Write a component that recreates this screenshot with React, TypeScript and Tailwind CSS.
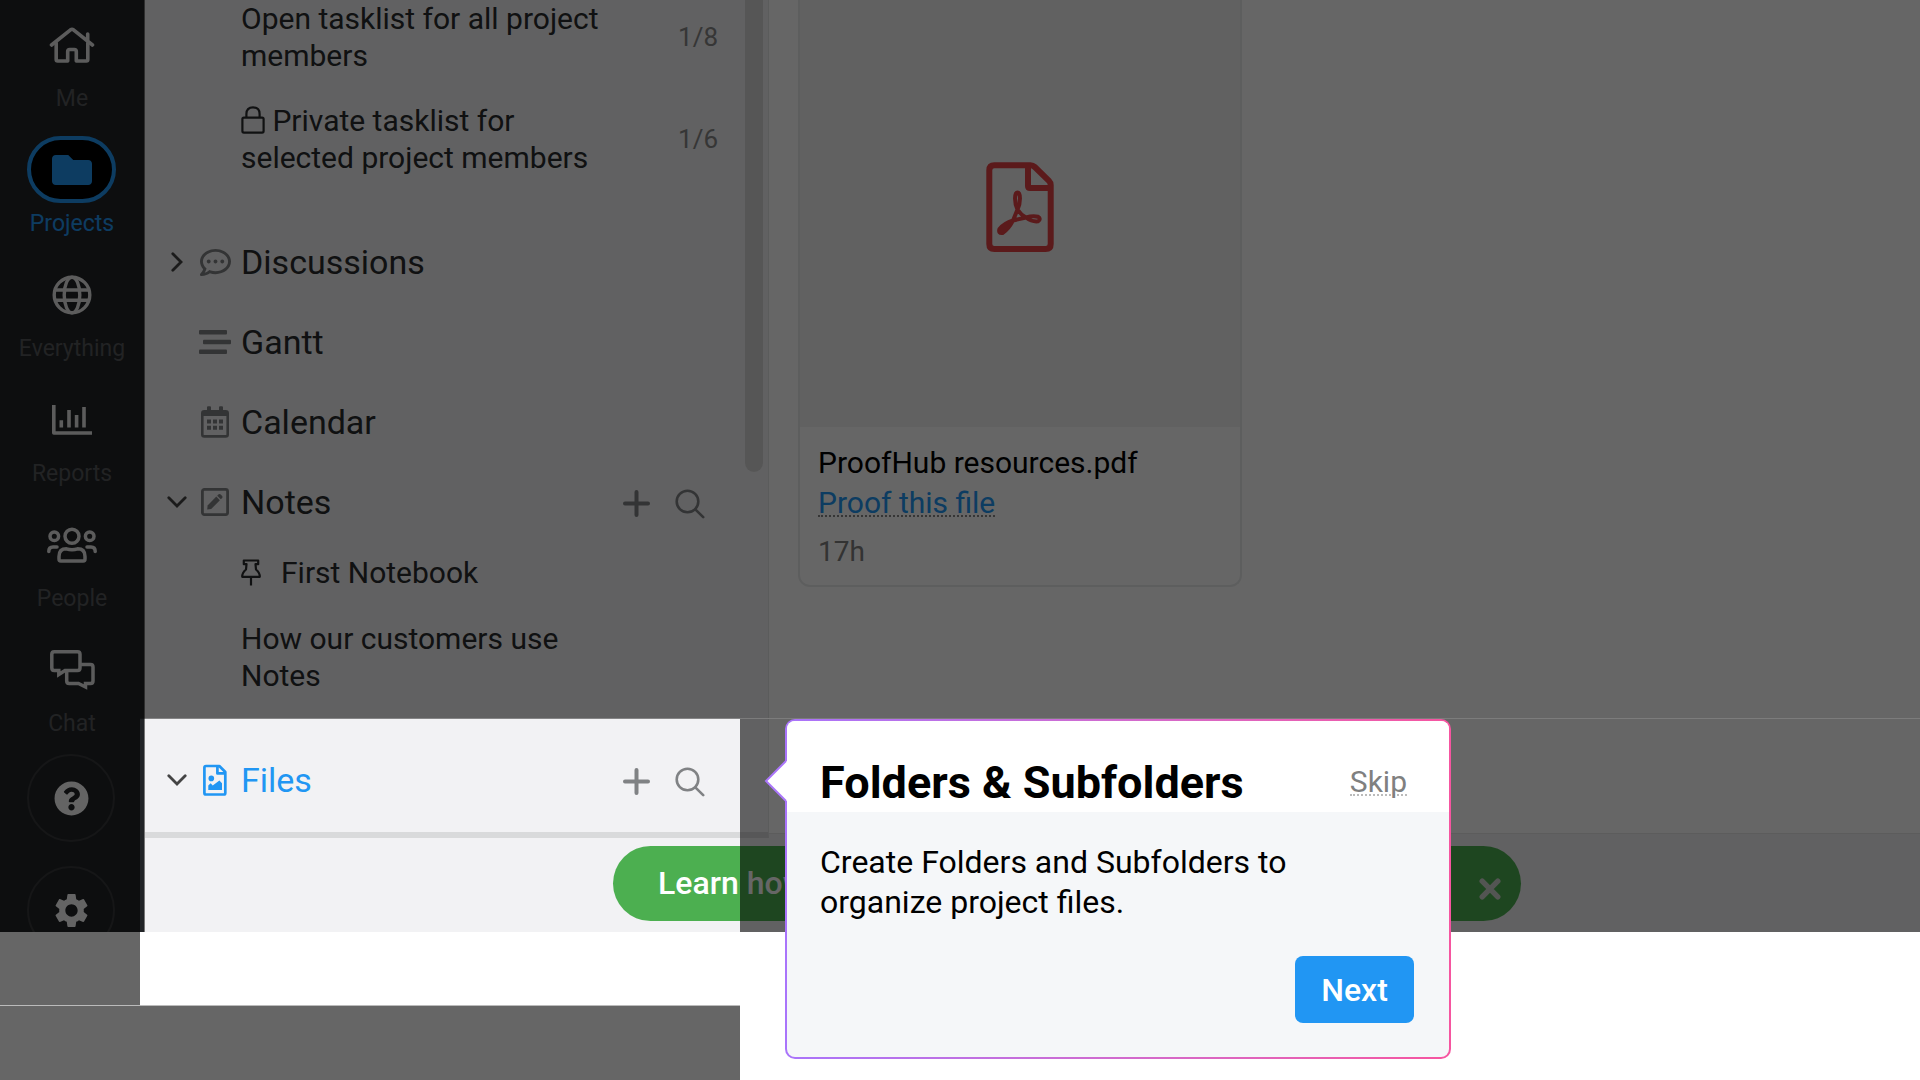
import type { ReactNode } from "react";
import { FaFolder, FaQuestionCircle, FaRegCommentDots } from "react-icons/fa";
import { MdSettings } from "react-icons/md";

export default function App() {
  return (
    <div className="relative min-h-screen overflow-hidden bg-white font-['Roboto',sans-serif]">
      <div className="flex">
        <NavRail />
        <div className="flex min-w-0 flex-1 flex-col">
          <div className="flex">
            <ProjectSidebar />
            <FilesView />
          </div>
          <WebinarBar />
        </div>
      </div>
      <TourBackdrop />
      <TourPopover />
    </div>
  );
}

/* ---------- left rail ---------- */

const railItems: { label: string; icon: ReactNode; active?: boolean }[] = [
  { label: "Me", icon: <HomeIcon /> },
  { label: "Projects", icon: <FolderIcon />, active: true },
  { label: "Everything", icon: <GlobeIcon /> },
  { label: "Reports", icon: <ReportsIcon /> },
  { label: "People", icon: <PeopleIcon /> },
  { label: "Chat", icon: <ChatIcon /> },
];

function FolderIcon() {
  return <FaFolder size={40} />;
}

// contain-size keeps the rail as tall as the page next to it, extra items are clipped
function NavRail() {
  return (
    <nav className="w-[145px] shrink-0 overflow-hidden border-r border-[#777] bg-[#212427] contain-size">
      <div className="flex flex-col items-center pt-[11px]">
        <div className="flex flex-col gap-[22px]">
          {railItems.map((item) => (
            <RailItem key={item.label} {...item} />
          ))}
        </div>
        <div className="mt-[15px] flex flex-col gap-6 pr-[2px]">
          <RoundButton label="Help">
            <FaQuestionCircle size={35} />
          </RoundButton>
          <RoundButton label="Settings">
            <MdSettings size={41} />
          </RoundButton>
        </div>
      </div>
    </nav>
  );
}

function RailItem({ label, icon, active }: { label: string; icon: ReactNode; active?: boolean }) {
  return (
    <a href="#" className="flex flex-col items-center gap-[6px]">
      <span
        className={
          active
            ? "flex h-[67px] w-[89px] items-center justify-center rounded-full border-4 border-[#2196f3] bg-black text-[#2196f3]"
            : "flex h-[67px] w-[89px] items-center justify-center text-[#e6e6e6]"
        }
      >
        {icon}
      </span>
      <span className={active ? "text-[23px] leading-[30px] text-[#2196f3]" : "text-[23px] leading-[30px] text-[#55575a]"}>
        {label}
      </span>
    </a>
  );
}

function RoundButton({ label, children }: { label: string; children: ReactNode }) {
  return (
    <button
      aria-label={label}
      className="flex size-[88px] shrink-0 items-center justify-center rounded-full border-2 border-[#37393b] text-[#fafafa]"
    >
      {children}
    </button>
  );
}

/* ---------- project sidebar ---------- */

function ProjectSidebar() {
  return (
    <aside className="relative w-[624px] shrink-0 border-r border-b-[6px] border-r-[#e4e5e7] border-b-[#d9dadb] bg-[#f2f2f4] pb-3 text-[#2a2c2d]">
      <ul className="flex flex-col gap-7 pr-[50px] pl-24 text-[30px] leading-[37px]">
        <li className="flex items-center justify-between">
          <span className="max-w-[370px]">Open tasklist for all project members</span>
          <span className="text-[26px] text-[#888]">1/8</span>
        </li>
        <li className="flex items-center justify-between">
          <span className="max-w-[370px]">
            <LockIcon /> Private tasklist for selected project members
          </span>
          <span className="text-[26px] text-[#888]">1/6</span>
        </li>
      </ul>

      <div className="mt-[46px]">
        <SectionRow title="Discussions" arrow="right" icon={<FaRegCommentDots size={31} />} />
        <SectionRow title="Gantt" icon={<GanttIcon />} />
        <SectionRow title="Calendar" icon={<CalendarIcon />} />
        <SectionRow title="Notes" arrow="down" icon={<NoteIcon />} hasActions />
      </div>

      <ul className="mt-3 flex flex-col gap-[29px] pl-24 text-[30px] leading-[37px]">
        <li className="flex items-center gap-5">
          <PinIcon />
          First Notebook
        </li>
        <li className="max-w-[466px] pr-24">How our customers use Notes</li>
      </ul>

      <div className="mt-[46px]">
        <SectionRow title="Files" arrow="down" icon={<FileImageIcon />} hasActions active />
      </div>

      <div className="absolute top-0 right-[5px] h-[472px] w-[18px] rounded-b-full bg-[#d8d8d8]" />
    </aside>
  );
}

type SectionRowProps = {
  title: string;
  icon: ReactNode;
  arrow?: "right" | "down";
  hasActions?: boolean;
  active?: boolean;
};

function SectionRow({ title, icon, arrow, hasActions, active }: SectionRowProps) {
  return (
    <div className="flex h-20 items-center gap-[10px] pr-[63px] pl-[19px]">
      <span className="flex w-[25px] justify-center text-[#444]">
        {arrow === "right" && <ChevronRight />}
        {arrow === "down" && <ChevronDown />}
      </span>
      <span className={active ? "flex w-8 justify-center text-[#2196f3]" : "flex w-8 justify-center text-[#808284]"}>{icon}</span>
      <a href="#" className={active ? "text-[34px] leading-10 text-[#2196f3]" : "text-[34px] leading-10"}>
        {title}
      </a>
      {hasActions && (
        <div className="mt-[3px] ml-auto flex items-center gap-[25px] text-[#808284]">
          <button aria-label={`Add to ${title}`}>
            <PlusIcon />
          </button>
          <button aria-label={`Search ${title}`}>
            <SearchIcon />
          </button>
        </div>
      )}
    </div>
  );
}

/* ---------- files ---------- */

function FilesView() {
  return (
    <main className="flex min-w-0 flex-1 flex-col">
      <div className="flex-1 pl-[29px]">
        <article className="w-[444px] overflow-hidden rounded-b-xl border-2 border-t-0 border-[#e9eaeb]">
          <div className="flex h-[427px] items-center justify-center bg-[#f2f2f2] pb-[14px] text-[#e34245]">
            <FilePdfIcon />
          </div>
          <div className="px-[18px] pt-4 pb-[13px] text-[30px] leading-10">
            <h3 className="text-black">ProofHub resources.pdf</h3>
            <div className="flex h-[42px] items-center">
              <a href="#" className="border-b-2 border-dotted border-[#888] leading-6 text-[#2196f3]">
                Proof this file
              </a>
            </div>
            <p className="mt-[7px] text-[28px] text-[#808080]">17h</p>
          </div>
        </article>
      </div>
      <div className="h-[5px] border-t border-[#e6e6e6] bg-[#f2f2f4]" />
    </main>
  );
}

function WebinarBar() {
  return (
    <footer className="bg-[#f2f2f4] pt-2 pb-[11px] pl-[468px]">
      <div className="flex h-[75px] w-[908px] items-center justify-between rounded-full bg-[#4caf50] pr-5 pl-[45px] text-white">
        <a href="#" className="pb-[2px] text-[32px] font-medium">
          Learn how
        </a>
        <button aria-label="Close" className="mt-[10px] text-[#d0d5cf]">
          <svg width="22" height="22" viewBox="0 0 22 22" fill="none" stroke="currentColor" strokeWidth="5.4" strokeLinecap="round">
            <path d="M3.2 3.2 18.8 18.8M18.8 3.2 3.2 18.8" />
          </svg>
        </button>
      </div>
    </footer>
  );
}

/* ---------- guided tour ---------- */

// Four dark panes laid around the highlighted "Files" row
function TourBackdrop() {
  return (
    <div className="pointer-events-none absolute inset-0 flex flex-col">
      <div className="h-[718px] shrink-0 bg-black/60" />
      <div className="flex shrink-0">
        <div className="h-[287px] w-[140px] bg-black/60" />
        <div className="h-px w-[600px] bg-black/45" />
        <div className="h-[214px] flex-1 border-t border-[#7c7c7c] bg-black/60" />
      </div>
      <div className="w-[740px] flex-1 border-t border-[#bbb] bg-black/60 bg-clip-padding" />
    </div>
  );
}

function TourPopover() {
  return (
    <section
      role="dialog"
      aria-labelledby="tour-title"
      className="absolute top-[719px] left-[785px] w-[666px] rounded-[10px] bg-linear-to-r from-[#a974fb] to-[#f655a0] p-[2px]"
    >
      <div className="rounded-lg bg-[#f5f7f9]">
        <header className="flex items-center justify-between rounded-t-lg bg-white pt-9 pr-[42px] pb-[3px] pl-[33px]">
          <h2 id="tour-title" className="text-[45px] leading-[52px] font-bold text-black">
            Folders &amp; Subfolders
          </h2>
          <button className="border-b-2 border-dotted border-[#bbb] text-[30px] leading-6 text-[#808080]">Skip</button>
        </header>
        <div className="pt-[30px] pr-[35px] pb-[34px] pl-[33px]">
          <p className="max-w-[500px] text-[32px] leading-10 text-black">Create Folders and Subfolders to organize project files.</p>
          <div className="mt-[34px] flex justify-end">
            <button className="h-[67px] w-[119px] rounded-lg bg-[#2196f3] text-[32px] font-medium text-white">Next</button>
          </div>
        </div>
      </div>
      <svg className="absolute top-[41px] -left-[21px]" width="24" height="42" viewBox="0 0 24 42">
        <path d="M24 0.5 L21.5 1.5 L2 21 L21.5 40.5 L24 41.5Z" fill="#fff" />
        <path d="M22 1 L2 21 L22 41" fill="none" stroke="#ab76fa" strokeWidth="2" />
      </svg>
    </section>
  );
}

/* ---------- icons ---------- */

function HomeIcon() {
  return (
    <svg width="46" height="38" viewBox="0 0 46 38" fill="none" stroke="currentColor" strokeWidth="3.6" strokeLinecap="round" strokeLinejoin="round">
      <path d="M2.5 19 21.5 3.8Q23 2.8 24.5 3.8L43.5 19M38.7 8V14" />
      <path d="M7.2 17V33.5Q7.2 35 8.7 35H18.7V25.5Q18.7 23.5 20.7 23.5H25.3Q27.3 23.5 27.3 25.5V35H37.3Q38.8 35 38.8 33.5V17" />
    </svg>
  );
}

function GlobeIcon() {
  return (
    <svg width="40" height="40" viewBox="0 0 40 40" fill="none" stroke="currentColor" strokeWidth="3.4">
      <circle cx="20" cy="20" r="17.8" />
      <ellipse cx="20" cy="20" rx="7.8" ry="17.8" />
      <path d="M3 15H37M3 25.2H37" />
    </svg>
  );
}

function ReportsIcon() {
  return (
    <svg width="40" height="32" viewBox="0 0 40 32" fill="none" stroke="currentColor" strokeWidth="3.6" strokeLinejoin="round">
      <path d="M1.8 1V29H40" />
      <path d="M9.3 16.2V23.5M17 6V23.5M24.6 11V23.5M32 3V23.5" />
    </svg>
  );
}

function PeopleIcon() {
  return (
    <svg width="50" height="38" viewBox="0 0 50 38" fill="none" stroke="currentColor" strokeWidth="3.5" strokeLinecap="round" strokeLinejoin="round">
      <circle cx="25" cy="10.3" r="7" />
      <circle cx="7.3" cy="10.2" r="4.3" />
      <circle cx="42.7" cy="10.2" r="4.3" />
      <path d="M1.8 25.5Q1.8 21 6 21H10M48.2 25.5Q48.2 21 44 21H40" />
      <path d="M13.8 35H36.2Q38 35 38 33V30.5Q38 22.8 30.5 22.8Q25 24.6 19.5 22.8Q12 22.8 12 30.5V33Q12 35 13.8 35Z" />
    </svg>
  );
}

function ChatIcon() {
  return (
    <svg width="46" height="42" viewBox="0 0 46 42" fill="none" stroke="currentColor" strokeWidth="3.5">
      <path d="M5.3 2.8H28.5Q31 2.8 31 5.3V19Q31 21.5 28.5 21.5H16L9.8 25.5V21.5H5.3Q2.8 21.5 2.8 19V5.3Q2.8 2.8 5.3 2.8Z" />
      <path d="M31 15.5H41.5Q44 15.5 44 18V32Q44 34.5 41.5 34.5H36.5V38L29.5 34.5H20.2Q17.7 34.5 17.7 32V22" />
    </svg>
  );
}

function LockIcon() {
  return (
    <svg className="inline-block align-[-3px]" width="24" height="28" viewBox="0 0 24 28" fill="none" stroke="currentColor" strokeWidth="2.2">
      <rect x="1.4" y="11.6" width="21.2" height="15" rx="1.5" />
      <path d="M5.4 11.6V8Q5.4 1.4 12 1.4T18.6 8V11.6" />
    </svg>
  );
}

function GanttIcon() {
  return (
    <svg width="32" height="24" viewBox="0 0 32 24" fill="currentColor">
      <rect x="0" y="0" width="28" height="4.4" rx="1" />
      <rect x="4" y="9.8" width="28" height="4.4" rx="1" />
      <rect x="0" y="19.6" width="28" height="4.4" rx="1" />
    </svg>
  );
}

function CalendarIcon() {
  return (
    <svg width="28" height="32" viewBox="0 0 28 32" fill="currentColor">
      <rect x="1.3" y="5.2" width="25.4" height="25.2" rx="2" fill="none" stroke="currentColor" strokeWidth="2.6" />
      <path d="M1 5h26v5H1zM6 1.2Q6 .3 7 .3H9Q10 .3 10 1.2V5H6zM18 1.2Q18 .3 19 .3H21Q22 .3 22 1.2V5H18z" />
      <path d="M6 13.6h4v4H6zM12 13.6h4v4h-4zM18 13.6h4v4h-4zM6 19.8h4v4H6zM12 19.8h4v4h-4zM18 19.8h4v4h-4z" />
    </svg>
  );
}

function NoteIcon() {
  return (
    <svg width="28" height="28" viewBox="0 0 28 28" fill="currentColor">
      <rect x="1.4" y="1.4" width="25.2" height="25.2" rx="2" fill="none" stroke="currentColor" strokeWidth="2.8" />
      <path d="M6.2 21.5 6.6 17.4 15.3 8.6 18.9 12.2 10.2 20.9Z" />
      <path d="M16.2 7.7 17.6 6.3Q18.5 5.6 19.4 6.3L21.2 8.1Q21.9 9 21.2 9.9L19.8 11.3Z" />
    </svg>
  );
}

function FileImageIcon() {
  return (
    <svg width="24" height="32" viewBox="0 0 24 32" fill="none" stroke="currentColor" strokeWidth="2.7" strokeLinejoin="round">
      <path d="M3 2H16.3L22.3 8V29Q22.3 30.5 20.8 30.5H3Q1.4 30.5 1.4 29V3.6Q1.4 2 3 2ZM14.4 2V9.4H22.3" />
      <circle cx="8.3" cy="14.4" r="2.8" fill="currentColor" stroke="none" />
      <path d="M5.3 21.4 7.7 19.3 9.7 21.4 16.4 16.6 19 19.3V26H5.3Z" fill="currentColor" stroke="none" />
    </svg>
  );
}

function FilePdfIcon() {
  return (
    <svg width="68" height="90" viewBox="0 0 68 90" fill="none" stroke="currentColor" strokeLinejoin="round">
      <path d="M8.3 3.3H44.5Q47 3.3 48.8 5L63 18.8Q64.7 20.5 64.7 23V82Q64.7 87 59.7 87H8.3Q3.3 87 3.3 82V8.3Q3.3 3.3 8.3 3.3Z" strokeWidth="6" />
      <path d="M42 4V24Q42 26 44 26H64" strokeWidth="6" />
      <path d="M31.5 47.5C28.2 41 28.2 30.5 31.5 30.5S34.8 41 31.5 47.5L27 58.5Q22.5 67 16.5 71Q12 71.5 13.5 67Q18 61.5 27 58.5L40 55.5Q47 53.5 52 54.8Q55.5 57 52 59.3Q46 60 40 55.5Q35 53 31.5 47.5" strokeWidth="4" />
      <path d="M24 62Q21 68 16 71.5L13 68Q17 63 24 62Z" fill="currentColor" strokeWidth="2" />
    </svg>
  );
}

function PinIcon() {
  return (
    <svg width="20" height="27" viewBox="0 0 20 27" fill="none" stroke="currentColor" strokeWidth="2.2" strokeLinejoin="round">
      <path d="M2.8 1.5H17.2V5.2H14.5L15 10.5Q18.8 13.5 18.8 17.8H1.2Q1.2 13.5 5 10.5L5.5 5.2H2.8Z" />
      <path d="M10 18V26.5" />
    </svg>
  );
}

function ChevronRight() {
  return (
    <svg width="12" height="20" viewBox="0 0 12 20" fill="none" stroke="currentColor" strokeWidth="2.8" strokeLinecap="round">
      <path d="M1.8 1.8 10 10 1.8 18.2" />
    </svg>
  );
}

function ChevronDown() {
  return (
    <svg width="20" height="12" viewBox="0 0 20 12" fill="none" stroke="currentColor" strokeWidth="2.8" strokeLinecap="round">
      <path d="M1.8 1.8 10 10 18.2 1.8" />
    </svg>
  );
}

function PlusIcon() {
  return (
    <svg width="27" height="27" viewBox="0 0 27 27" fill="none" stroke="currentColor" strokeWidth="4" strokeLinecap="round">
      <path d="M13.5 2V25M2 13.5H25" />
    </svg>
  );
}

function SearchIcon() {
  return (
    <svg width="30" height="30" viewBox="0 0 30 30" fill="none" stroke="currentColor" strokeWidth="2.6" strokeLinecap="round">
      <circle cx="12.5" cy="12.5" r="10.8" />
      <path d="M20.3 20.3 28.2 28.2" />
    </svg>
  );
}
